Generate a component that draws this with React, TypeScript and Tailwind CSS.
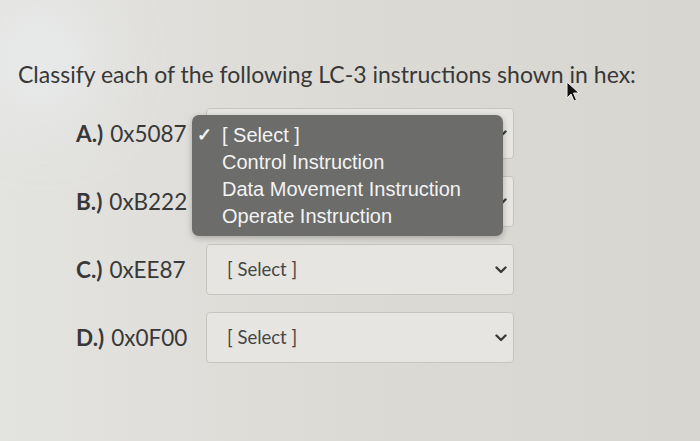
import React from "react";

const rows = [
  { letter: "A.)", hex: "0x5087" },
  { letter: "B.)", hex: "0xB222" },
  { letter: "C.)", hex: "0xEE87" },
  { letter: "D.)", hex: "0x0F00" },
];

const options = ["[ Select ]", "Control Instruction", "Data Movement Instruction", "Operate Instruction"];

function Chevron() {
  return (
    <svg width="12" height="8" viewBox="0 0 12 8" className="text-[#3c3c3c]">
      <path d="M1.5 1.5 L6 6 L10.5 1.5" fill="none" stroke="currentColor" strokeWidth="2.4" strokeLinecap="round" strokeLinejoin="round" />
    </svg>
  );
}

export default function App() {
  return (
    <div
      className="relative w-[700px] h-[441px] overflow-hidden bg-gradient-to-r from-[#e3e3e0] via-[#dcdad5] to-[#d8d6d1] text-[#383838]"
      style={{ fontFamily: "Lato, 'Noto Sans', sans-serif" }}
    >
      <div className="absolute left-0 top-0 w-[90px] h-[120px] rounded-full bg-[#eef2f6] opacity-70 blur-2xl" />

      <div className="relative pt-[58px] pl-[18px]">
        <h1 className="text-[23px] leading-[32px] font-normal">
          Classify each of the following LC-3 instructions shown in hex:
        </h1>

        <div className="mt-[18px] pl-[58px] flex flex-col gap-[17px]">
          {rows.map((r) => (
            <div key={r.letter} className="flex items-center h-[51px]">
              <div className="w-[130px] text-[22.5px] whitespace-nowrap">
                <span className="font-bold">{r.letter}</span>
                <span className="ml-[7px]">{r.hex}</span>
              </div>
              <div className="w-[308px] h-[51px] flex items-center justify-between pl-[20px] pr-[6px] rounded-[4px] border border-[#c6c5c0] bg-[#e6e5e1]">
                <span className="text-[18.5px] text-[#454545]">[ Select ]</span>
                <Chevron />
              </div>
            </div>
          ))}
        </div>
      </div>

      <div
        className="absolute left-[192px] top-[115px] w-[311px] h-[121px] rounded-[7px] bg-[#6c6c6b] shadow-[0_2px_6px_rgba(0,0,0,0.25)] pt-[6px] text-[#f3f3f3]"
        style={{ fontFamily: "'Liberation Sans', Roboto, sans-serif" }}
      >
        {options.map((o, i) => (
          <div key={o} className="flex items-center h-[27px] text-[20px] leading-none">
            <span className="w-[30px] pl-[5px] text-[18px] font-bold">{i === 0 ? "✓" : ""}</span>
            <span>{o}</span>
          </div>
        ))}
      </div>

      <svg className="absolute left-[566px] top-[81px]" width="14" height="22" viewBox="0 0 14 22">
        <path d="M1 1 L1 17 L5 13 L8 20 L10.5 19 L7.5 12 L13 12 Z" fill="#111" stroke="#eee" strokeWidth="1" />
      </svg>
    </div>
  );
}
